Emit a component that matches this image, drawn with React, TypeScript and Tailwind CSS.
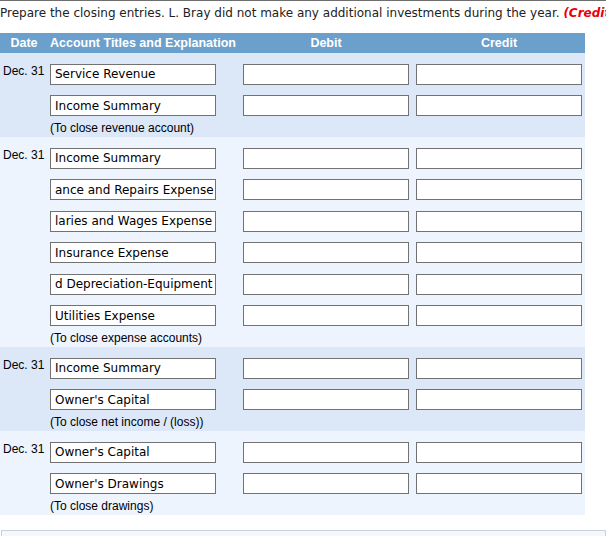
import React from "react";

interface Entry {
  lines: string[];
  note: string;
  dark: boolean;
}

const entries: Entry[] = [
  { lines: ["Service Revenue", "Income Summary"], note: "(To close revenue account)", dark: true },
  {
    lines: [
      "Income Summary",
      "ance and Repairs Expense",
      "laries and Wages Expense",
      "Insurance Expense",
      "d Depreciation-Equipment",
      "Utilities Expense",
    ],
    note: "(To close expense accounts)",
    dark: false,
  },
  { lines: ["Income Summary", "Owner's Capital"], note: "(To close net income / (loss))", dark: true },
  { lines: ["Owner's Capital", "Owner's Drawings"], note: "(To close drawings)", dark: false },
];

const verdana = "font-['DejaVu_Sans',Verdana,sans-serif]";
const tahoma = "font-['Liberation_Sans',Tahoma,Arial,sans-serif]";

function Box({ text }: { text?: string }) {
  return (
    <div
      className={`w-[166px] h-[21px] shrink-0 bg-white border border-[#727272] pl-[4px] flex items-center overflow-hidden whitespace-nowrap text-[12px] text-black ${verdana}`}
    >
      {text}
    </div>
  );
}

function EntryGroup({ entry }: { entry: Entry }) {
  return (
    <div className={`flex ${entry.dark ? "bg-[#dce7f8]" : "bg-[#edf4fe]"}`}>
      <div className={`w-[50px] shrink-0 pl-[3px] pt-[11px] text-[12px] leading-[14px] text-black ${tahoma}`}>
        Dec. 31
      </div>
      <div className="flex flex-col pt-[10.5px] pb-[1px]">
        <div className="flex flex-col gap-y-[10.5px]">
          {entry.lines.map((line, i) => (
            <div key={i} className="flex">
              <Box text={line} />
              <div className="w-[27px] shrink-0" />
              <Box />
              <div className="w-[7px] shrink-0" />
              <Box />
            </div>
          ))}
        </div>
        <div className={`mt-[4px] text-[12px] leading-[16px] text-black ${tahoma}`}>{entry.note}</div>
      </div>
      <div className="w-[3px] shrink-0" />
    </div>
  );
}

export default function App() {
  return (
    <div className="w-[606px] h-[536px] overflow-hidden bg-white">
      <div className="border-t border-[#6e6e6e] h-[33px]">
        <p className={`pt-[4px] text-[12px] leading-[16px] whitespace-nowrap text-[#222] ${verdana}`}>
          Prepare the closing entries. L. Bray did not make any additional investments during the year.{" "}
          <span className="font-bold italic text-[#e8000b]">(Credit account titles are automatically indented)</span>
        </p>
      </div>

      <div className="w-[585px]">
        <div className={`flex h-[20px] items-center bg-[#6b9fcc] text-white font-bold text-[12.5px] ${tahoma}`}>
          <div className="w-[48px] text-center">Date</div>
          <div className="w-[195px] pl-[2px] whitespace-nowrap">Account Titles and Explanation</div>
          <div className="w-[166px] text-center">Debit</div>
          <div className="w-[7px]" />
          <div className="w-[166px] text-center">Credit</div>
        </div>
        {entries.map((entry, i) => (
          <EntryGroup key={i} entry={entry} />
        ))}
      </div>

      <div className="mt-[15px] ml-[1px] h-[40px] border border-[#c8d2de] bg-[#f5f7fa]" />
    </div>
  );
}
